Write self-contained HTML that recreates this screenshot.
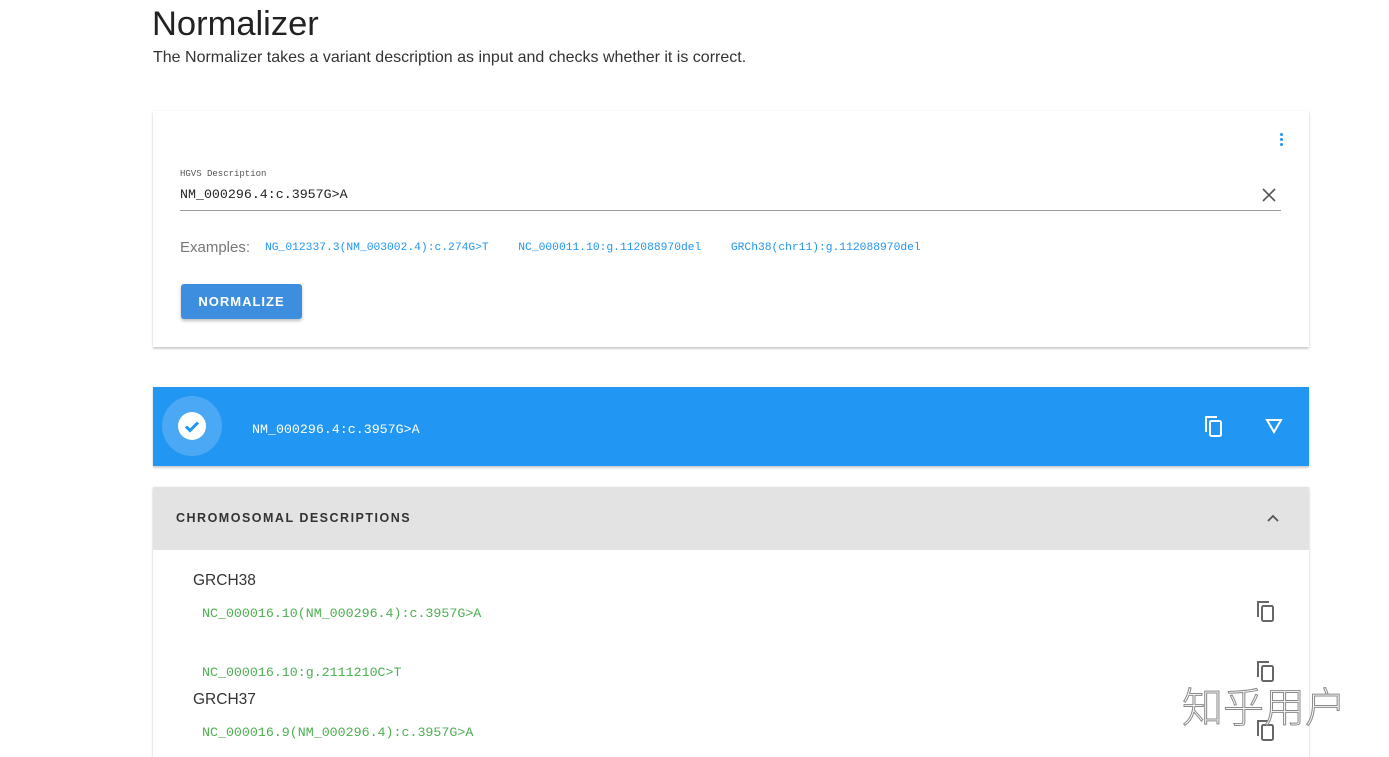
<!DOCTYPE html>
<html><head><meta charset="utf-8"><style>
*{margin:0;padding:0;box-sizing:border-box}
body{width:1389px;height:745px;overflow:hidden;background:#fff;font-family:"Liberation Sans",sans-serif;position:relative}
.a{position:absolute}
.mono{font-family:"Liberation Mono","Noto Serif CJK SC",monospace}
.card{position:absolute;left:153px;width:1156px;background:#fff;box-shadow:0 2px 2px rgba(0,0,0,.18),0 0 2px rgba(0,0,0,.08)}
.green{color:#4caf50;font-size:13.3px}
</style></head><body>
<div class="a" style="left:152px;top:5px;font-size:34.5px;color:#222">Normalizer</div>
<div class="a" style="left:153px;top:49px;font-size:16px;color:#333">The Normalizer takes a variant description as input and checks whether it is correct.</div>

<div class="card" style="top:111px;height:236px">
  <div class="a" style="left:1127px;top:22px;width:4px">
    <div style="width:3px;height:3px;border-radius:50%;background:#2196f3;margin-bottom:2px"></div>
    <div style="width:3px;height:3px;border-radius:50%;background:#2196f3;margin-bottom:2px"></div>
    <div style="width:3px;height:3px;border-radius:50%;background:#2196f3"></div>
  </div>
  <div class="a mono" style="left:27px;top:58px;font-size:9px;color:#555">HGVS Description</div>
  <div class="a mono" style="left:27px;top:76px;font-size:13.3px;color:#222">NM_000296.4:c.3957G&gt;A</div>
  <div class="a" style="left:27px;top:99px;width:1101px;height:1px;background:#999"></div>
  <svg class="a" style="left:1108px;top:76px" width="16" height="16" viewBox="0 0 16 16"><path d="M2 2L14 14M14 2L2 14" stroke="#555" stroke-width="1.6"/></svg>
  <div class="a" style="left:27px;top:128px;font-size:15px;color:#777">Examples:</div>
  <div class="a mono" style="left:112px;top:131px;font-size:11.3px;color:#2196f3;word-spacing:8px">NG_012337.3(NM_003002.4):c.274G&gt;T&nbsp; NC_000011.10:g.112088970del&nbsp; GRCh38(chr11):g.112088970del</div>
  <div class="a" style="left:28px;top:173px;width:121px;height:35px;background:#3d8ede;border-radius:3px;box-shadow:0 2px 3px rgba(0,0,0,.25);color:#fff;font-weight:bold;font-size:13px;letter-spacing:1px;text-align:center;line-height:35px">NORMALIZE</div>
</div>

<div class="card" style="top:387px;height:79px;background:#2196f3">
  <div class="a" style="left:9px;top:9px;width:60px;height:60px;border-radius:50%;background:#4aa8f5"></div>
  <div class="a" style="left:25px;top:25px;width:28px;height:28px;border-radius:50%;background:#fff"></div>
  <svg class="a" style="left:25px;top:25px" width="28" height="28" viewBox="0 0 28 28"><path d="M8 14.5l4 4 8-8" stroke="#2196f3" stroke-width="3" fill="none"/></svg>
  <div class="a mono" style="left:99px;top:35px;font-size:13.3px;color:#fff">NM_000296.4:c.3957G&gt;A</div>
  <svg class="a" style="left:1050px;top:27px" width="22" height="24" viewBox="0 0 22 24"><path d="M3 18V3h11" stroke="#fff" stroke-width="2" fill="none"/><rect x="7" y="7" width="11" height="15" rx="1.5" stroke="#fff" stroke-width="2" fill="none"/></svg>
  <svg class="a" style="left:1112px;top:31px" width="18" height="16" viewBox="0 0 18 16"><path d="M2 2h14L9 14z" stroke="#fff" stroke-width="2" fill="none"/></svg>
</div>

<div class="card" style="top:487px;height:270px">
  <div class="a" style="left:0;top:0;width:1156px;height:63px;background:#e3e3e3"></div>
  <div class="a" style="left:23px;top:24px;font-size:12.5px;font-weight:bold;letter-spacing:1.5px;color:#333">CHROMOSOMAL DESCRIPTIONS</div>
  <svg class="a" style="left:1113px;top:26px" width="14" height="10" viewBox="0 0 14 10"><path d="M2 8l5-5 5 5" stroke="#555" stroke-width="1.8" fill="none"/></svg>
  <div class="a" style="left:40px;top:85px;font-size:15.5px;color:#333">GRCH38</div>
  <div class="a mono green" style="left:49px;top:119px">NC_000016.10(NM_000296.4):c.3957G&gt;A</div>
  <div class="a mono green" style="left:49px;top:178px">NC_000016.10:g.2111210C&gt;T</div>
  <div class="a" style="left:40px;top:204px;font-size:15.5px;color:#333">GRCH37</div>
  <div class="a mono green" style="left:49px;top:238px">NC_000016.9(NM_000296.4):c.3957G&gt;A</div>
  <svg class="a" style="left:1102px;top:112px" width="22" height="24" viewBox="0 0 22 24"><path d="M3 18V3h11" stroke="#666" stroke-width="2" fill="none"/><rect x="7" y="7" width="11" height="15" rx="1.5" stroke="#666" stroke-width="2" fill="none"/></svg>
  <svg class="a" style="left:1102px;top:172px" width="22" height="24" viewBox="0 0 22 24"><path d="M3 18V3h11" stroke="#666" stroke-width="2" fill="none"/><rect x="7" y="7" width="11" height="15" rx="1.5" stroke="#666" stroke-width="2" fill="none"/></svg>
  <svg class="a" style="left:1102px;top:231px" width="22" height="24" viewBox="0 0 22 24"><path d="M3 18V3h11" stroke="#666" stroke-width="2" fill="none"/><rect x="7" y="7" width="11" height="15" rx="1.5" stroke="#666" stroke-width="2" fill="none"/></svg>
</div>
<div class="a" style="left:1182px;top:674px;font-size:41px;color:rgba(255,255,255,.85);-webkit-text-stroke:1px #888;font-family:'Noto Sans CJK SC',sans-serif;font-weight:300">知乎用户</div>
</body></html>
